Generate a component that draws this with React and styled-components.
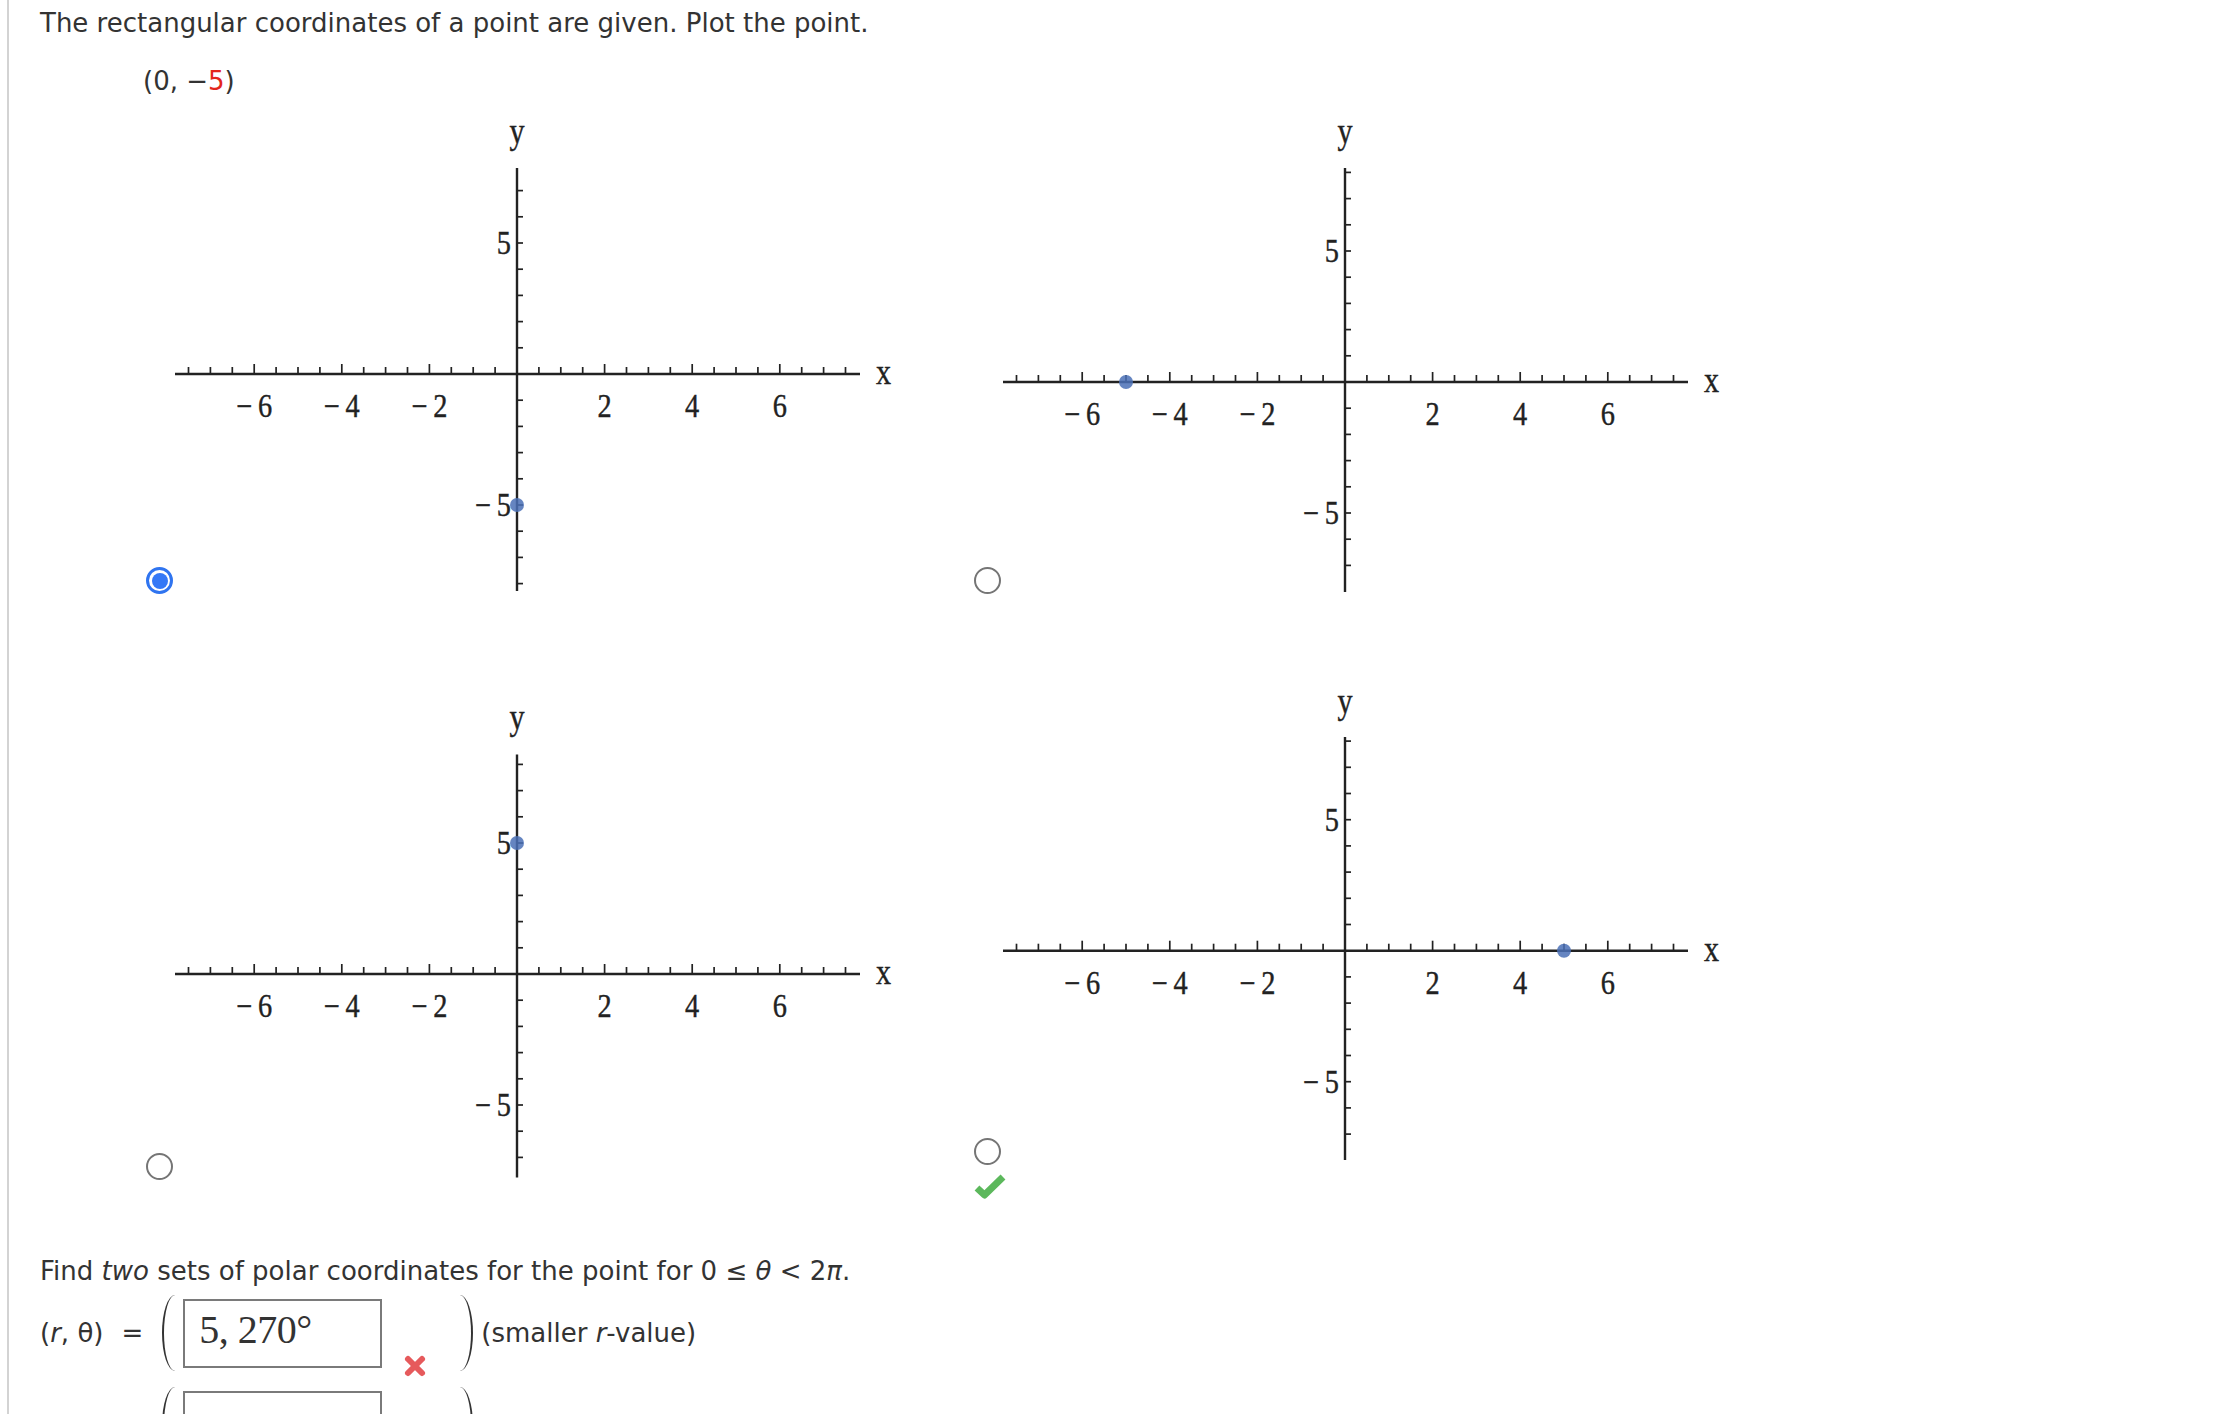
import React from "react";
import styled, { createGlobalStyle } from "styled-components";

const GlobalStyle = createGlobalStyle`
  html, body { margin: 0; padding: 0; background: #fff; }
  body { font-family: "DejaVu Sans", Verdana, sans-serif; color: #333; }
`;

const Page = styled.div`
  margin-left: 7px;
  border-left: 2px solid #d3d3d3;
  padding: 3px 0 0 31px;
  min-height: 100vh;
  box-sizing: border-box;
  overflow: hidden;
`;

const Prompt = styled.p`
  margin: 0;
  font-size: 26px;
  line-height: 40px;
  white-space: nowrap;
`;

const Coords = styled.div`
  margin: 18px 0 0 103px;
  font-size: 26px;
  line-height: 40px;
`;

const Red = styled.span`
  color: #e3261c;
`;

const ChoiceGrid = styled.div`
  display: grid;
  grid-template-columns: repeat(2, 828px);
  row-gap: 80px;
  align-items: start;
  margin: 9px 0 0 106px;
`;

const Choice = styled.div`
  display: flex;
  align-items: flex-end;
`;

const RadioSlot = styled.div`
  position: relative;
  width: 28px;
  flex-shrink: 0;
`;

const Radio = styled.span`
  display: block;
  position: relative;
  box-sizing: border-box;
  width: 27px;
  height: 27px;
  margin-bottom: 2px;
  border-radius: 50%;
  background: #fff;
  border: ${p => (p.$checked ? "3px solid #2f74f0" : "2px solid #757575")};
  &::after {
    content: "";
    display: ${p => (p.$checked ? "block" : "none")};
    position: absolute;
    inset: 2.5px;
    border-radius: 50%;
    background: #3478f6;
  }
`;

const Feedback = styled.svg`
  position: absolute;
  left: -2px;
  top: 34px;
`;

const GraphSvg = styled.svg`
  display: block;
  flex-shrink: 0;
  font-family: "Liberation Serif", "Times New Roman", serif;
`;

const Question = styled(Prompt)`
  margin-top: 69px;
`;

const AnswerRow = styled.div`
  display: flex;
  align-items: center;
  height: 76px;
  margin-top: 4px;
  & + & {
    margin-top: 16px;
  }
`;

const MathLabel = styled.span`
  font-size: 26px;
  line-height: 40px;
  white-space: nowrap;
`;

const Eq = styled.span`
  margin-left: 18px;
`;

const Paren = styled.span`
  display: block;
  box-sizing: border-box;
  width: 13px;
  height: 76px;
  flex-shrink: 0;
  ${p =>
    p.$right
      ? "border-right: 2.5px solid #333; border-radius: 0 100% 100% 0 / 0 50% 50% 0; margin-left: 33px;"
      : "border-left: 2.5px solid #333; border-radius: 100% 0 0 100% / 50% 0 0 50%; margin-left: 19px;"}
`;

const AnswerBox = styled.div`
  box-sizing: border-box;
  width: 199px;
  height: 69px;
  margin-left: 8px;
  flex-shrink: 0;
  border: 2px solid #7a7a7a;
  padding: 0 14px;
  font-family: "Liberation Serif", "Times New Roman", serif;
  font-size: 40px;
  letter-spacing: -0.5px;
  line-height: 58px;
  color: #333;
  white-space: nowrap;
`;

const WrongMark = styled.svg`
  align-self: flex-end;
  margin: 0 0 -7px 21px;
  flex-shrink: 0;
`;

const NoMark = styled.span`
  width: 24px;
  margin-left: 21px;
  flex-shrink: 0;
`;

const Hint = styled.span`
  margin-left: 8px;
  font-size: 26px;
  line-height: 40px;
  white-space: nowrap;
`;

const UX = 43.8;
const UY = 26.2;
const OX = 343;
const X_END = 686;

const graphs = [
  { id: "a", checked: true, h: 486, labelY: 33.4, top: 58, axisY: 264, bottom: 481, pt: [0, -5] },
  { id: "b", h: 486, labelY: 33, top: 58, axisY: 272, bottom: 482, pt: [-5, 0] },
  { id: "c", h: 506, labelY: 53, top: 78.6, axisY: 298, bottom: 501.6, pt: [0, 5] },
  { id: "d", h: 490.5, labelY: 36.7, top: 61, axisY: 274.7, bottom: 484, pt: [5, 0], correct: true },
];

function Tick({ x, y, anchor = "middle", children }) {
  return (
    <text transform={`translate(${x} ${y}) scale(0.86 1)`} textAnchor={anchor}>
      {children}
    </text>
  );
}

function Graph({ h, labelY, top, axisY, bottom, pt }) {
  const xTicks = [];
  for (let k = -15; k <= 15; k++) {
    if (k === 0) continue;
    const x = OX + (k * UX) / 2;
    const len = k % 4 === 0 ? 10 : 7;
    xTicks.push(<line key={k} x1={x} y1={axisY} x2={x} y2={axisY - len} />);
  }
  const yTicks = [];
  for (let n = -10; n <= 10; n++) {
    const y = axisY - n * UY;
    if (n === 0 || y < top + 2 || y > bottom - 2) continue;
    yTicks.push(<line key={n} x1={OX} y1={y} x2={OX + 6} y2={y} />);
  }
  const xLabels = [-6, -4, -2, 2, 4, 6];
  return (
    <GraphSvg width="800" height={h} viewBox={`0 0 800 ${h}`}>
      <g stroke="#222" strokeWidth="2.4">
        <line x1="1" y1={axisY} x2={X_END} y2={axisY} />
        <line x1={OX} y1={top} x2={OX} y2={bottom} />
      </g>
      <g stroke="#222" strokeWidth="1.7">
        {xTicks}
        {yTicks}
      </g>
      <g fill="#222" stroke="#222" strokeWidth="0.4" fontSize="33">
        {xLabels.map(v => (
          <Tick key={v} x={OX + v * UX} y={axisY + 43}>
            {v < 0 ? `\u2212\u2009${-v}` : v}
          </Tick>
        ))}
        <Tick x={OX - 6} y={axisY - 5 * UY + 11} anchor="end">5</Tick>
        <Tick x={OX - 6} y={axisY + 5 * UY + 11} anchor="end">{"\u2212\u20095"}</Tick>
      </g>
      <g fill="#222" stroke="#222" strokeWidth="0.4" fontSize="35">
        <Tick x={OX} y={labelY}>y</Tick>
        <Tick x={X_END + 16} y={axisY + 10} anchor="start">x</Tick>
      </g>
      <circle cx={OX + pt[0] * UX} cy={axisY - pt[1] * UY} r="7" fill="#4a70b6" opacity="0.85" />
    </GraphSvg>
  );
}

function CheckIcon() {
  return (
    <Feedback width="36" height="28" viewBox="0 0 36 28">
      <polyline points="5,16 12.5,23 31,5" fill="none" stroke="#5cb85c" strokeWidth="7" strokeLinejoin="round" />
    </Feedback>
  );
}

function CrossIcon() {
  return (
    <WrongMark width="24" height="24" viewBox="0 0 24 24">
      <g stroke="#e65a5c" strokeWidth="6" strokeLinecap="round">
        <line x1="5" y1="5" x2="19" y2="19" />
        <line x1="19" y1="5" x2="5" y2="19" />
      </g>
    </WrongMark>
  );
}

function Answer({ value, wrong, hint }) {
  return (
    <AnswerRow>
      <MathLabel>
        (<i>r</i>, θ)<Eq>=</Eq>
      </MathLabel>
      <Paren />
      <AnswerBox>{value}</AnswerBox>
      {wrong ? <CrossIcon /> : <NoMark />}
      <Paren $right />
      <Hint>
        ({hint} <i>r</i>-value)
      </Hint>
    </AnswerRow>
  );
}

export default function App() {
  return (
    <Page>
      <GlobalStyle />
      <Prompt>The rectangular coordinates of a point are given. Plot the point.</Prompt>
      <Coords>
        (0, −<Red>5</Red>)
      </Coords>
      <ChoiceGrid>
        {graphs.map(g => (
          <Choice key={g.id}>
            <RadioSlot>
              <Radio $checked={g.checked} />
              {g.correct && <CheckIcon />}
            </RadioSlot>
            <Graph {...g} />
          </Choice>
        ))}
      </ChoiceGrid>
      <Question>
        Find <i>two</i> sets of polar coordinates for the point for 0 ≤ <i>θ</i> &lt; 2<i>π</i>.
      </Question>
      <Answer value="5, 270°" wrong hint="smaller" />
      <Answer value="" hint="larger" />
    </Page>
  );
}
